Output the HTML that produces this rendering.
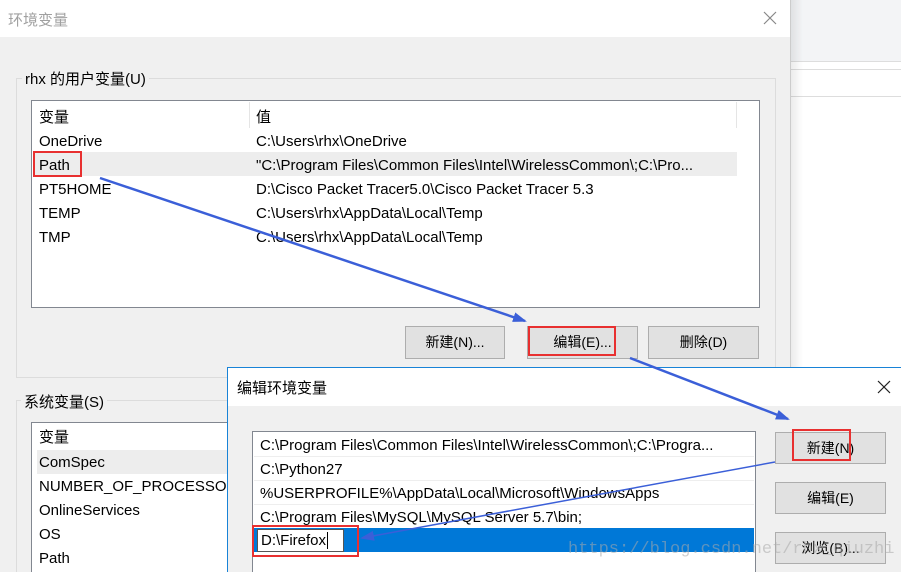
<!DOCTYPE html><html><head><meta charset="utf-8"><style>
*{margin:0;padding:0;box-sizing:border-box}
html,body{width:901px;height:572px;overflow:hidden}
body{position:relative;background:#fff;font-family:"Liberation Sans","Noto Sans CJK SC",sans-serif;font-size:15px;color:#000}
.a{position:absolute}
.btn{position:absolute;background:#e1e1e1;border:1px solid #adadad;text-align:center;font-size:14px}
.row{position:absolute;height:24px;line-height:24px;white-space:nowrap}
.red{position:absolute;border:2px solid #e83030}
</style></head><body>
<div class="a" style="left:791px;top:0;width:110px;height:61px;background:#f3f4f6"></div>
<div class="a" style="left:791px;top:61px;width:110px;height:1px;background:#ddd"></div>
<div class="a" style="left:791px;top:69px;width:110px;height:1px;background:#ddd"></div>
<div class="a" style="left:791px;top:96px;width:110px;height:1px;background:#ddd"></div>
<div class="a" style="left:791px;top:0;width:12px;height:572px;background:linear-gradient(90deg,rgba(0,0,0,.08),rgba(0,0,0,0))"></div>
<div class="a" style="left:0;top:0;width:791px;height:572px;background:#f0f0f0;border-right:1px solid #ccc;overflow:hidden">
<div class="a" style="left:0;top:0;width:790px;height:37px;background:#fff"></div>
<div class="a" style="left:8px;top:9px;color:#a0a0a0;font-size:15px">环境变量</div>
<svg class="a" style="left:763px;top:11px" width="14" height="14"><path d="M1,1 L13,13 M13,1 L1,13" stroke="#888" stroke-width="1.2"/></svg>
<div class="a" style="left:16px;top:78px;width:760px;height:300px;border:1px solid #dcdcdc"></div>
<div class="a" style="left:22px;top:68px;background:#f0f0f0;padding:0 3px;font-size:15px">rhx 的用户变量(U)</div>
<div class="a" style="left:31px;top:100px;width:729px;height:208px;background:#fff;border:1px solid #828790"></div>
<div class="a" style="left:249px;top:102px;width:1px;height:26px;background:#e5e5e5"></div>
<div class="a" style="left:736px;top:102px;width:1px;height:26px;background:#e5e5e5"></div>
<div class="a" style="left:33px;top:152px;width:704px;height:24px;background:#ededed"></div>
<div class="row" style="left:39px;top:106px">变量</div><div class="row" style="left:256px;top:106px">值</div>
<div class="row" style="left:39px;top:130px">OneDrive</div><div class="row" style="left:256px;top:130px">C:\Users\rhx\OneDrive</div>
<div class="row" style="left:39px;top:154px">Path</div><div class="row" style="left:256px;top:154px">"C:\Program Files\Common Files\Intel\WirelessCommon\;C:\Pro...</div>
<div class="row" style="left:39px;top:178px">PT5HOME</div><div class="row" style="left:256px;top:178px">D:\Cisco Packet Tracer5.0\Cisco Packet Tracer 5.3</div>
<div class="row" style="left:39px;top:202px">TEMP</div><div class="row" style="left:256px;top:202px">C:\Users\rhx\AppData\Local\Temp</div>
<div class="row" style="left:39px;top:226px">TMP</div><div class="row" style="left:256px;top:226px">C:\Users\rhx\AppData\Local\Temp</div>
<div class="red" style="left:33px;top:151px;width:49px;height:26px"></div>
<div class="btn" style="left:405px;top:326px;width:100px;height:33px;line-height:31px">新建(N)...</div>
<div class="btn" style="left:527px;top:326px;width:111px;height:33px;line-height:31px">编辑(E)...</div>
<div class="btn" style="left:648px;top:326px;width:111px;height:33px;line-height:31px">删除(D)</div>
<div class="red" style="left:528px;top:326px;width:88px;height:30px"></div>
<div class="a" style="left:16px;top:400px;width:760px;height:180px;border:1px solid #dcdcdc"></div>
<div class="a" style="left:21px;top:391px;background:#f0f0f0;padding:0 3px;font-size:15px">系统变量(S)</div>
<div class="a" style="left:31px;top:422px;width:729px;height:160px;background:#fff;border:1px solid #828790"></div>
<div class="a" style="left:37px;top:450px;width:200px;height:24px;background:#ededed"></div>
<div class="row" style="left:39px;top:426px">变量</div>
<div class="row" style="left:39px;top:451px">ComSpec</div>
<div class="row" style="left:39px;top:475px">NUMBER_OF_PROCESSORS</div>
<div class="row" style="left:39px;top:499px">OnlineServices</div>
<div class="row" style="left:39px;top:523px">OS</div>
<div class="row" style="left:39px;top:547px">Path</div>
</div>
<div class="a" style="left:227px;top:367px;width:674px;height:205px;background:#f0f0f0;border-left:1px solid #1883d7;border-top:1px solid #1883d7;overflow:hidden">
<div class="a" style="left:0;top:0;width:674px;height:38px;background:#fff"></div>
<div class="a" style="left:9px;top:9px;font-size:15px">编辑环境变量</div>
<svg class="a" style="left:649px;top:12px" width="14" height="14"><path d="M1,1 L13,13 M13,1 L1,13" stroke="#222" stroke-width="1.2"/></svg>
<div class="a" style="left:24px;top:63px;width:504px;height:150px;background:#fff;border:1px solid #828790"></div>
<div class="a" style="left:26px;top:160px;width:500px;height:24px;background:#0078d7"></div>
<div class="a" style="left:26px;top:88px;width:500px;height:1px;background:#eee"></div>
<div class="a" style="left:26px;top:112px;width:500px;height:1px;background:#eee"></div>
<div class="a" style="left:26px;top:136px;width:500px;height:1px;background:#eee"></div>
<div class="row" style="left:32px;top:66px">C:\Program Files\Common Files\Intel\WirelessCommon\;C:\Progra...</div>
<div class="row" style="left:32px;top:90px">C:\Python27</div>
<div class="row" style="left:32px;top:114px">%USERPROFILE%\AppData\Local\Microsoft\WindowsApps</div>
<div class="row" style="left:32px;top:138px">C:\Program Files\MySQL\MySQL Server 5.7\bin;</div>
<div class="a" style="left:29px;top:161px;width:87px;height:23px;background:#fff;border:1px solid #555;line-height:22px;padding-left:3px">D:\Firefox<span style="border-left:1px solid #000;margin-left:1px"></span></div>
<div class="red" style="left:24px;top:157px;width:107px;height:32px"></div>
<div class="btn" style="left:547px;top:64px;width:111px;height:32px;line-height:30px">新建(N)</div>
<div class="btn" style="left:547px;top:114px;width:111px;height:32px;line-height:30px">编辑(E)</div>
<div class="btn" style="left:547px;top:164px;width:111px;height:32px;line-height:30px">浏览(B)...</div>
<div class="red" style="left:564px;top:61px;width:59px;height:32px"></div>
</div>
<div class="a" style="left:568px;top:540px;color:rgba(170,170,170,.55);font-family:'Liberation Mono',monospace;font-size:17px;letter-spacing:0px">https://blog.csdn.net/rhx_qiuzhi</div>
<svg class="a" style="left:0;top:0" width="901" height="572">
<defs><marker id="m" markerWidth="14" markerHeight="10" refX="12" refY="5" orient="auto" markerUnits="userSpaceOnUse"><path d="M0,0 L14,5 L0,10 Z" fill="#3b5fd8"/></marker></defs>
<line x1="100" y1="178" x2="525" y2="321" stroke="#3b5fd8" stroke-width="2.5" marker-end="url(#m)"/>
<line x1="630" y1="358" x2="788" y2="419" stroke="#3b5fd8" stroke-width="2.5" marker-end="url(#m)"/>
<line x1="775" y1="462" x2="362" y2="538" stroke="#3b5fd8" stroke-width="1.5" marker-end="url(#m)"/>
</svg>
</body></html>
